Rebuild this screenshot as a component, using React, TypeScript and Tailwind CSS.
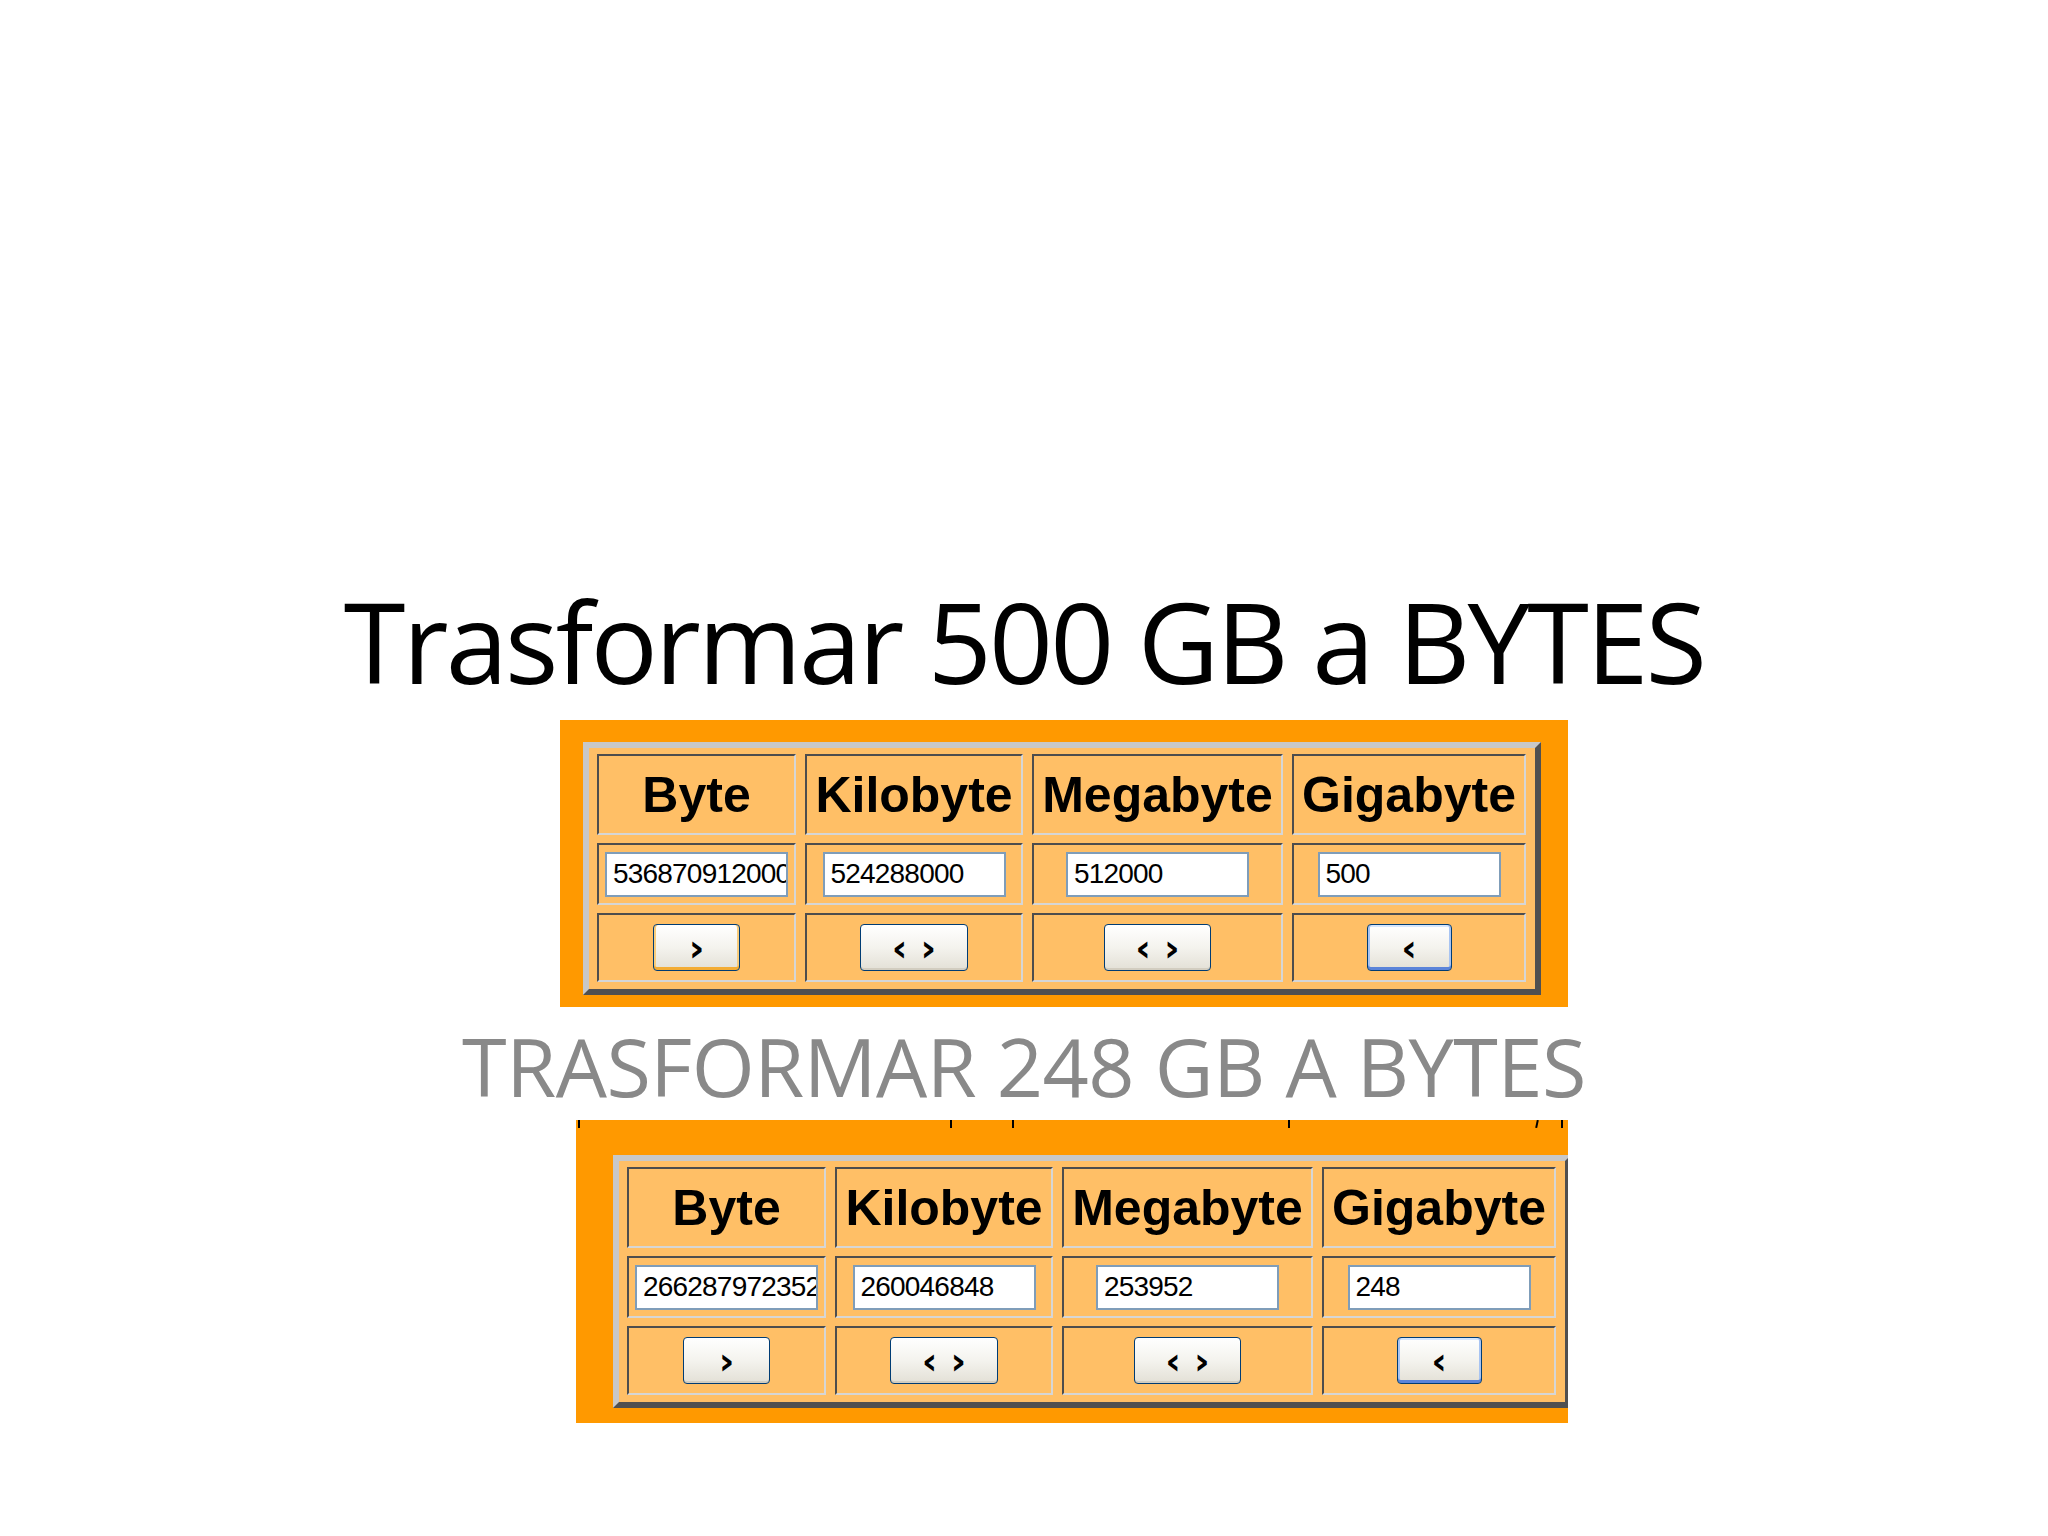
import React from 'react';

type Column = { label: string; value: string; arrows: string; tone: 'hover' | 'plain' | 'default' };

const firstTable: Column[] = [
  { label: 'Byte', value: '536870912000', arrows: '›', tone: 'hover' },
  { label: 'Kilobyte', value: '524288000', arrows: '‹ ›', tone: 'plain' },
  { label: 'Megabyte', value: '512000', arrows: '‹ ›', tone: 'plain' },
  { label: 'Gigabyte', value: '500', arrows: '‹', tone: 'default' },
];

const secondTable: Column[] = [
  { label: 'Byte', value: '266287972352', arrows: '›', tone: 'plain' },
  { label: 'Kilobyte', value: '260046848', arrows: '‹ ›', tone: 'plain' },
  { label: 'Megabyte', value: '253952', arrows: '‹ ›', tone: 'plain' },
  { label: 'Gigabyte', value: '248', arrows: '‹', tone: 'default' },
];

const buttonWidths = ['w-[87px]', 'w-[108px]', 'w-[107px]', 'w-[85px]'];

const toneClass = {
  hover: 'shadow-[inset_0_-3px_0_#f3ac34,inset_2px_0_0_#f8cd7e,inset_-2px_0_0_#f8cd7e]',
  plain: 'shadow-[inset_0_-2px_0_#d2cdc0]',
  default: 'shadow-[inset_0_-3px_0_#5b84d9,inset_2px_0_0_#a8c4f2,inset_-2px_0_0_#a8c4f2,inset_0_2px_0_#d6e6fd]',
};

const cell =
  'flex items-center justify-center border-2 border-t-[#4d4d4d] border-l-[#4d4d4d] border-r-[#d6d6d6] border-b-[#d6d6d6]';

function ConverterTable({ columns }: { columns: Column[] }) {
  return (
    <div className="w-[958px] grid grid-cols-[199px_218px_251px_234px] grid-rows-[81px_62px_69px] gap-x-[9px] gap-y-[8px] bg-[#ffbf66] border-[6px] border-t-[#c8c8c8] border-l-[#c8c8c8] border-r-[#505050] border-b-[#505050] pt-[6px] pl-[8px] pr-[9px] pb-[7px]">
      {columns.map((c) => (
        <div key={c.label} className={cell}>
          <span className="font-['Liberation_Sans',Arial,sans-serif] font-bold text-[50px] leading-none text-black">
            {c.label}
          </span>
        </div>
      ))}
      {columns.map((c) => (
        <div key={c.label + '-v'} className={cell}>
          <input
            readOnly
            value={c.value}
            className="w-[183px] h-[45px] bg-white border-2 border-[#7f9db9] pl-[6px] pr-0 font-['Liberation_Sans',Arial,sans-serif] text-[28px] tracking-[-0.8px] text-black outline-none"
          />
        </div>
      ))}
      {columns.map((c, i) => (
        <div key={c.label + '-b'} className={cell}>
          <button
            className={`${buttonWidths[i]} h-[47px] rounded-[4px] border border-[#003c74] bg-linear-to-b from-white via-[#f4f3ee] to-[#e3e0d6] ${toneClass[c.tone]} font-['DejaVu_Sans',sans-serif] font-bold text-[38px] leading-none text-black`}
          >
            {c.arrows}
          </button>
        </div>
      ))}
    </div>
  );
}

export default function App() {
  return (
    <div className="w-[2048px] h-[1536px] bg-white overflow-hidden flex flex-col">
      <h1 className="mt-[585px] text-center font-['Open_Sans',sans-serif] text-[112px] leading-[112px] tracking-[-2.8px] text-black">
        Trasformar 500 GB a BYTES
      </h1>

      <div className="mt-[23px] ml-[560px] w-[1008px] h-[287px] bg-[#ff9900] pt-[22px] pl-[23px] overflow-hidden">
        <ConverterTable columns={firstTable} />
      </div>

      <h2 className="mt-[18px] text-center font-['Open_Sans',sans-serif] text-[81px] leading-[81px] tracking-[-0.5px] text-[#898989]">
        TRASFORMAR 248 GB A BYTES
      </h2>

      <div className="relative mt-[14px] ml-[576px] w-[992px] h-[303px] bg-[#ff9900] pt-[35px] pl-[37px] overflow-hidden">
        {/* leftovers of the cropped screenshot above */}
        <span className="absolute top-0 left-[2px] w-[2px] h-[8px] bg-black" />
        <span className="absolute top-0 left-[374px] w-[2px] h-[8px] bg-black" />
        <span className="absolute top-0 left-[436px] w-[2px] h-[8px] bg-black" />
        <span className="absolute top-0 left-[712px] w-[2px] h-[8px] bg-black" />
        <span className="absolute top-0 left-[960px] w-[2px] h-[8px] bg-black rotate-12" />
        <span className="absolute top-0 left-[985px] w-[2px] h-[8px] bg-black" />
        <ConverterTable columns={secondTable} />
      </div>
    </div>
  );
}
